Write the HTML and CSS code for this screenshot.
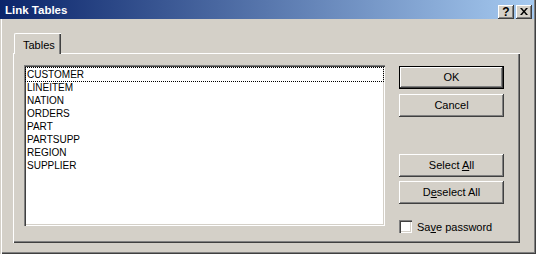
FILE: index.html
```html
<!DOCTYPE html>
<html>
<head>
<meta charset="utf-8">
<link rel="stylesheet" href="styles.css">
</head>
<body>
<div class="window">
  <div class="titlebar">
    <span class="title">Link Tables</span>
    <div class="tbtns">
      <div class="tbtn help">?</div>
      <div class="tbtn close">
        <svg width="8" height="7" viewBox="0 0 8 7"><path d="M0 0h2l2 2.5L6 0h2L5 3.5 8 7H6L4 4.5 2 7H0l3-3.5z" fill="#000"/></svg>
      </div>
    </div>
  </div>
  <div class="content">
    <div class="tabs">
      <div class="tab">Tables</div>
    </div>
    <div class="panel">
      <div class="listbox">
        <div class="item focus">CUSTOMER</div>
        <div class="item">LINEITEM</div>
        <div class="item">NATION</div>
        <div class="item">ORDERS</div>
        <div class="item">PART</div>
        <div class="item">PARTSUPP</div>
        <div class="item">REGION</div>
        <div class="item">SUPPLIER</div>
      </div>
      <div class="side">
        <div class="btn default ok"><span>OK</span></div>
        <div class="btn cancel"><span>Cancel</span></div>
        <div class="btn selall"><span>Select <u>A</u>ll</span></div>
        <div class="btn desel"><span>D<u>e</u>select All</span></div>
        <label class="check"><span class="box"></span><span>Sa<u>v</u>e password</span></label>
      </div>
    </div>
  </div>
</div>
</body>
</html>
```
FILE: styles.css
```css
* { box-sizing: border-box; }
html, body { margin: 0; padding: 0; background: #d4d0c8; }
body { font-family: "Liberation Sans", Arial, sans-serif; font-size: 11px; color: #000; }
.window {
  width: 536px; height: 254px; background: #d4d0c8; overflow: hidden;
  box-shadow: inset 1px 0 #d4d0c8, inset 2px 0 #fff, inset -1px -1px #404040, inset -2px -2px #808080;
}
.titlebar {
  height: 19px; margin-right: 2px;
  background: linear-gradient(to right, #0a246a, #a6caf0);
  display: flex; align-items: center; justify-content: space-between;
}
.title { color: #fff; font-weight: bold; font-size: 11.5px; padding-left: 5px; padding-top: 1px; }
.tbtns { display: flex; gap: 2px; margin-right: 2px; margin-top: 5px; align-self: flex-start; }
.tbtn {
  width: 16px; height: 14px; background: #d4d0c8;
  box-shadow: inset -1px -1px #404040, inset 1px 1px #fff, inset -2px -2px #808080, inset 2px 2px #d4d0c8;
  display: flex; align-items: center; justify-content: center;
}
.help { font-weight: bold; font-size: 12px; line-height: 14px; padding-left: 0; padding-bottom: 1px; }
.close svg { display: block; margin-top: -1px; }
.content { padding: 14px 0 0 13px; }
.tabs { display: flex; height: 20px; position: relative; z-index: 1; }
.tab {
  margin-left: 1px; width: 47px; height: 21px; padding: 5px 0 0 8px;
  background: #d4d0c8; border-top-left-radius: 2px;
  border-left: 1px solid #fff; border-top: 1px solid #fff;
  box-shadow: inset -1px 0 #404040, inset -2px 0 #808080;
}
.panel {
  width: 507px; height: 190px; display: flex;
  padding: 12px 0 0 11px;
  box-shadow: inset 1px 1px #fff, inset -1px -1px #404040, inset -2px -2px #808080;
}
.listbox {
  width: 361px; height: 161px; background: #fff; padding: 3px 2px 2px 2px;
  box-shadow: inset 1px 1px #808080, inset 2px 2px #404040, inset -1px -1px #fff, inset -2px -2px #d4d0c8;
}
.item { height: 13px; line-height: 13px; padding-left: 1px; font-size: 10px; white-space: nowrap; }
.item.focus { outline: 1px dotted #000; outline-offset: 0; }
.side { margin-left: 14px; display: flex; flex-direction: column; width: 106px; }
.btn {
  width: 105px; height: 23px; display: flex; align-items: center; justify-content: center;
  background: #d4d0c8;
  box-shadow: inset -1px -1px #404040, inset 1px 1px #fff, inset -2px -2px #808080;
}
.btn span { padding-bottom: 1px; }
.btn.default {
  box-shadow: inset 0 0 0 1px #000, inset -2px -2px #404040, inset 2px 2px #fff, inset -3px -3px #808080;
}
.ok { margin-top: 1px; }
.cancel { margin-top: 5px; }
.selall { margin-top: 37px; }
.desel { margin-top: 4px; }
.check { margin-top: 16px; display: flex; align-items: center; gap: 5px; }
.box {
  width: 13px; height: 13px; background: #fff;
  box-shadow: inset 1px 1px #808080, inset 2px 2px #404040, inset -1px -1px #fff, inset -2px -2px #d4d0c8;
}
u { text-decoration: underline; text-underline-offset: 1px; }
```
